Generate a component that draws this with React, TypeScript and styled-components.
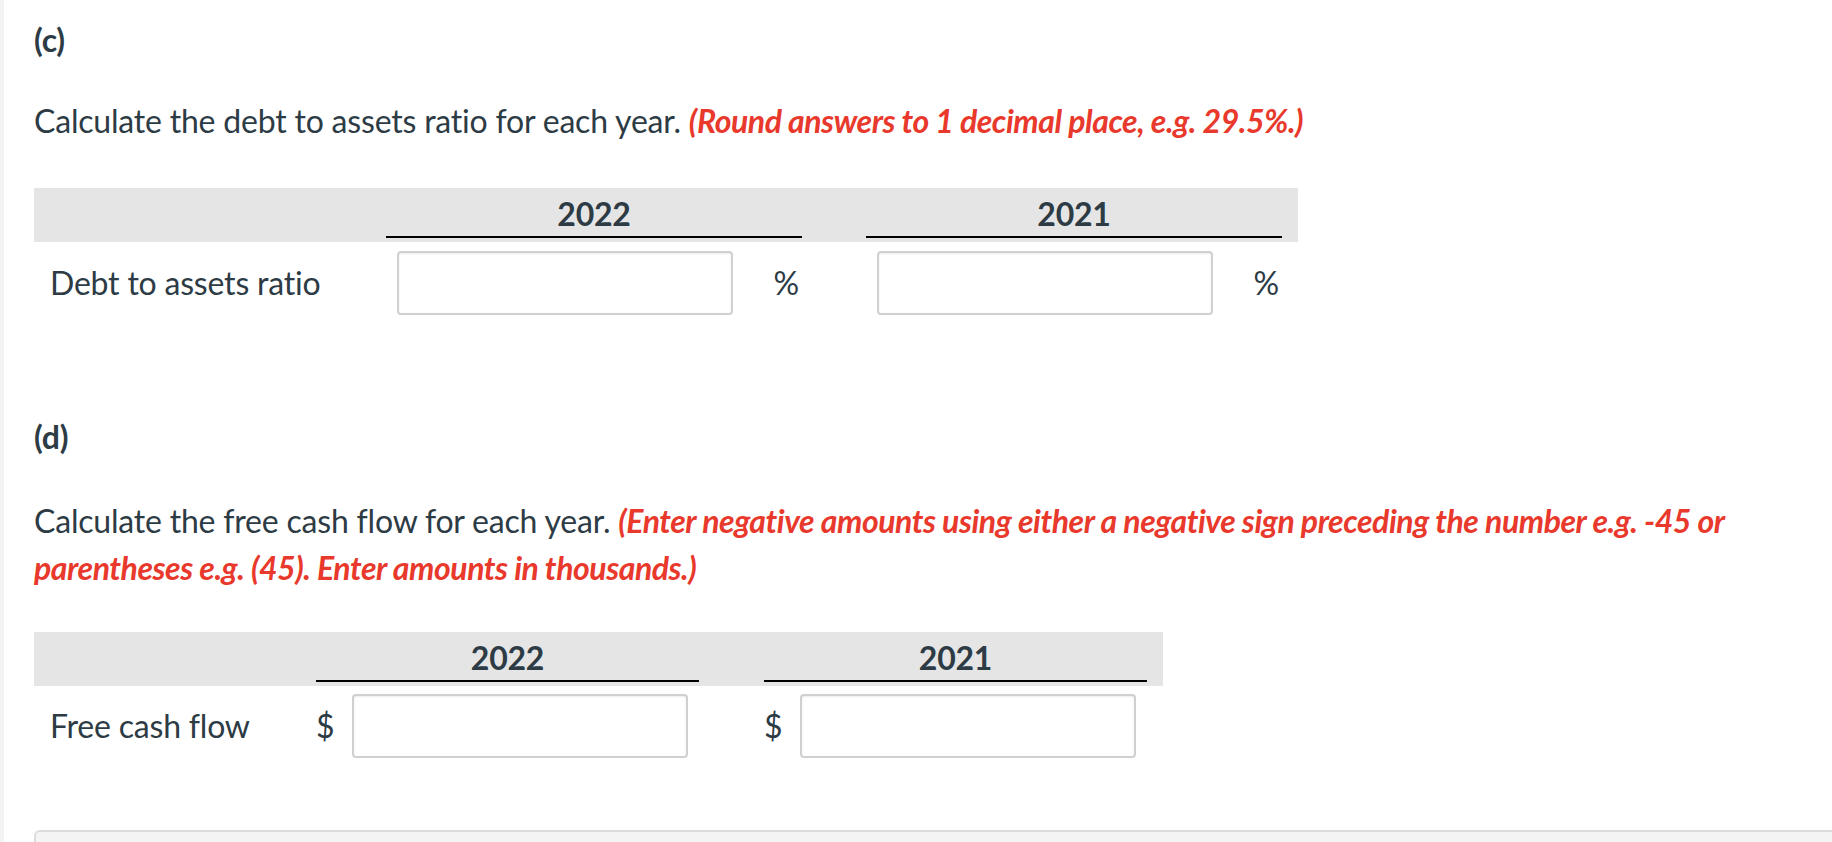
import React from "react";
import styled, { createGlobalStyle } from "styled-components";

const GlobalStyle = createGlobalStyle`
  html, body { margin: 0; padding: 0; background: #ffffff; }
  body {
    font-family: Lato, "Noto Sans", "Liberation Sans", sans-serif;
    color: #2d3b45;
    letter-spacing: -0.2px;
  }
  * { box-sizing: border-box; }
`;

const Page = styled.div`
  min-height: 842px;
  border-left: 4px solid #f3f3f3;
  padding: 16px 0 0 30px;
  overflow: hidden;
`;

const Section = styled.section<{ $top: number }>`
  margin-top: ${(p) => p.$top}px;
`;

const PartLabel = styled.h3`
  margin: 0;
  font-size: 32px;
  font-weight: 700;
  line-height: 48px;
`;

const Prompt = styled.p<{ $top: number; $bottom: number }>`
  margin: ${(p) => p.$top}px 0 ${(p) => p.$bottom}px;
  font-size: 32px;
  font-weight: 400;
  line-height: 47px;
`;

const Note = styled.em`
  color: #e8392c;
  font-style: italic;
  font-weight: 700;
  letter-spacing: -0.45px;
`;

const Row = styled.div<{ $label: number; $group: number; $gap: number }>`
  display: grid;
  grid-template-columns: ${(p) => p.$label}px ${(p) => p.$group}px ${(p) => p.$gap}px ${(p) => p.$group}px;
  padding-right: 16px;
  width: max-content;

  & > :last-child {
    grid-column: 4;
  }
`;

const HeaderRow = styled(Row)`
  background: #e5e5e5;
  padding-bottom: 4px;
`;

const BodyRow = styled(Row)<{ $padTop: number }>`
  padding-top: ${(p) => p.$padTop}px;
  align-items: center;
`;

const YearHead = styled.div`
  text-align: center;
  font-size: 32px;
  font-weight: 700;
  line-height: 40px;
  padding: 6px 0 2px;
  border-bottom: 2px solid #000000;
`;

const RowLabel = styled.div`
  font-size: 32px;
  line-height: 40px;
  padding-left: 16px;
  white-space: nowrap;
`;

const PercentCell = styled.div`
  display: flex;
  align-items: center;
  justify-content: space-between;
  padding: 0 3px 0 11px;
`;

const DollarCell = styled.div`
  display: flex;
  align-items: center;
  gap: 18px;
`;

const Unit = styled.span`
  font-size: 32px;
  line-height: 40px;
`;

const AnswerInput = styled.input`
  width: 336px;
  height: 64px;
  border: 2px solid #d0d0d0;
  border-radius: 4px;
  background: #ffffff;
  box-shadow: inset 0 1px 2px rgba(0, 0, 0, 0.08);
  font-family: inherit;
  font-size: 28px;
  padding: 0 12px;
  outline: none;
`;

const Footer = styled.div`
  margin-top: 72px;
  margin-right: -20px;
  height: 40px;
  background: #f4f4f4;
  border-top: 2px solid #dcdcdc;
  border-left: 2px solid #dcdcdc;
  border-top-left-radius: 6px;
`;

export default function App() {
  return (
    <>
      <GlobalStyle />
      <Page>
        <Section $top={0}>
          <PartLabel>(c)</PartLabel>
          <Prompt $top={33} $bottom={44}>
            Calculate the debt to assets ratio for each year.{" "}
            <Note>(Round answers to 1 decimal place, e.g. 29.5%.)</Note>
          </Prompt>
          <HeaderRow $label={352} $group={416} $gap={64}>
            <div />
            <YearHead>2022</YearHead>
            <YearHead>2021</YearHead>
          </HeaderRow>
          <BodyRow $label={352} $group={416} $gap={64} $padTop={9}>
            <RowLabel>Debt to assets ratio</RowLabel>
            <PercentCell>
              <AnswerInput aria-label="Debt to assets ratio 2022" />
              <Unit>%</Unit>
            </PercentCell>
            <PercentCell>
              <AnswerInput aria-label="Debt to assets ratio 2021" />
              <Unit>%</Unit>
            </PercentCell>
          </BodyRow>
        </Section>

        <Section $top={98}>
          <PartLabel>(d)</PartLabel>
          <Prompt $top={36} $bottom={41}>
            Calculate the free cash flow for each year.{" "}
            <Note>
              (Enter negative amounts using either a negative sign preceding the number e.g. -45 or
              parentheses e.g. (45). Enter amounts in thousands.)
            </Note>
          </Prompt>
          <HeaderRow $label={282} $group={383} $gap={65}>
            <div />
            <YearHead>2022</YearHead>
            <YearHead>2021</YearHead>
          </HeaderRow>
          <BodyRow $label={282} $group={383} $gap={65} $padTop={8}>
            <RowLabel>Free cash flow</RowLabel>
            <DollarCell>
              <Unit>$</Unit>
              <AnswerInput aria-label="Free cash flow 2022" />
            </DollarCell>
            <DollarCell>
              <Unit>$</Unit>
              <AnswerInput aria-label="Free cash flow 2021" />
            </DollarCell>
          </BodyRow>
        </Section>

        <Footer />
      </Page>
    </>
  );
}
